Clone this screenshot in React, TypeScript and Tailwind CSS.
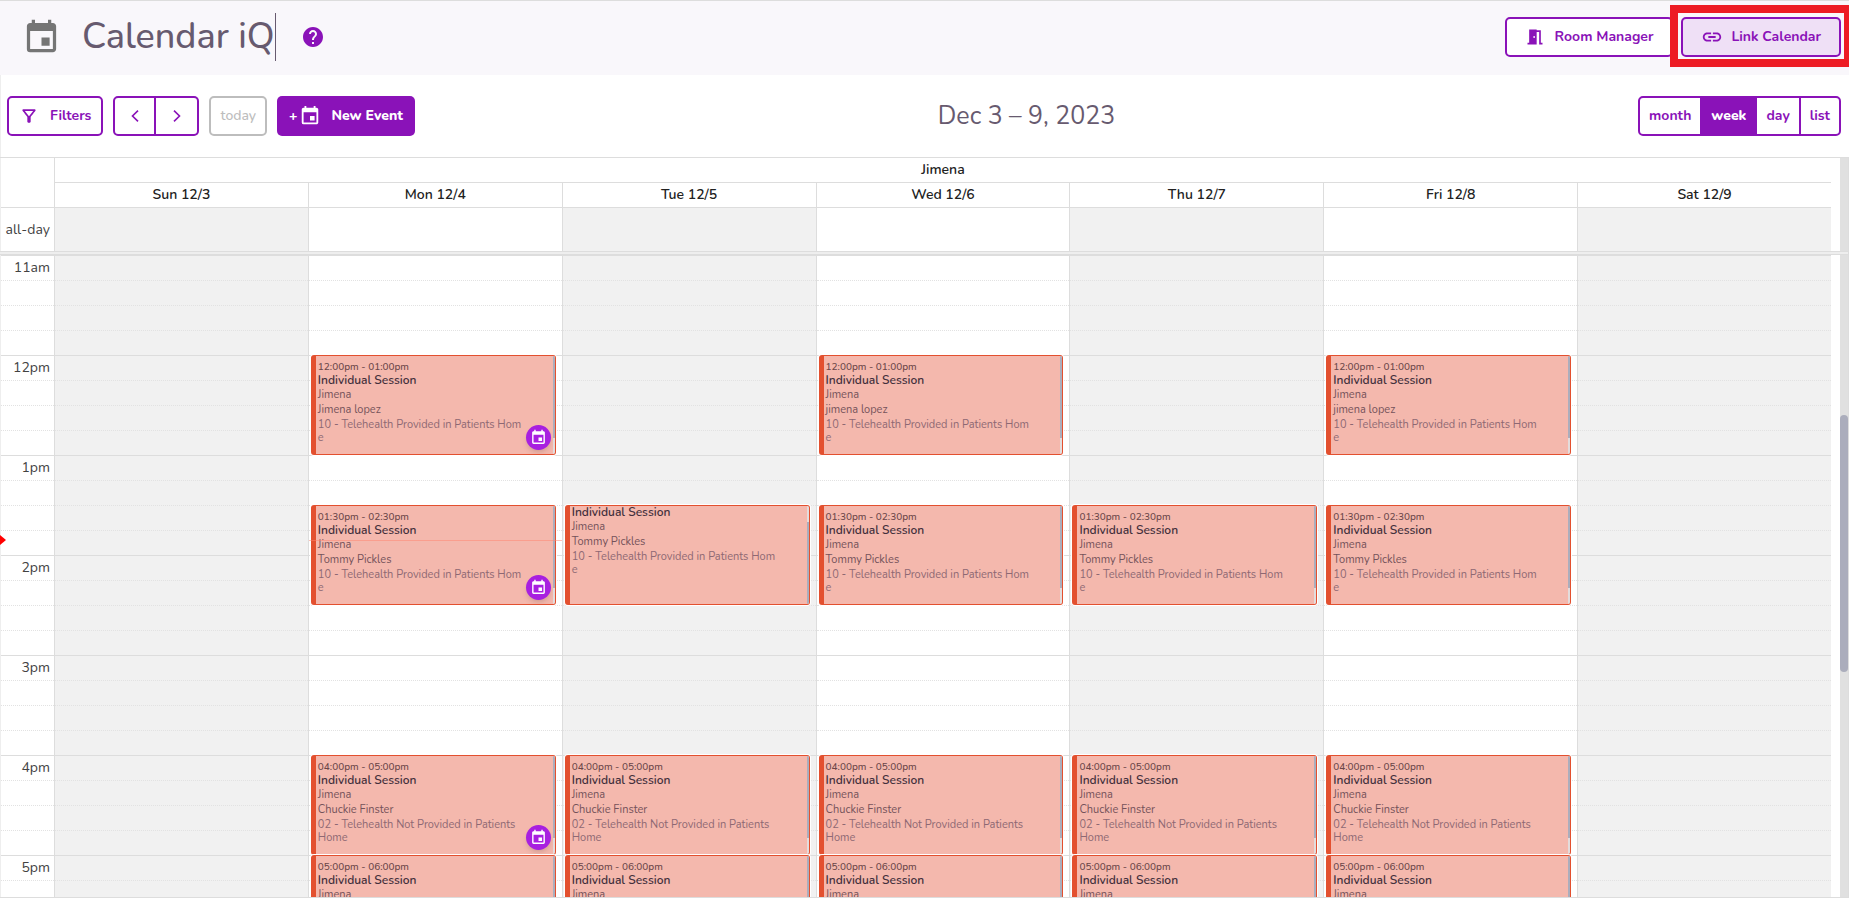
import React, { useState } from 'react'
import clsx from 'clsx'
import {
  MdHelp,
  MdInsertInvitation,
  MdLink,
  MdMeetingRoom,
  MdOutlineFilterAlt,
} from 'react-icons/md'

interface CalendarEvent {
  start: number
  time: string
  client: string
  place: string
  synced?: boolean
  scrolled?: boolean
}

interface Day {
  label: string
  now?: boolean
  events: CalendarEvent[]
}

const HOUR_HEIGHT = 100
const FIRST_HOUR = 11
const NOW = 13.85

const HOURS = ['11am', '12pm', '1pm', '2pm', '3pm', '4pm', '5pm']
const VIEWS = ['month', 'week', 'day', 'list']

const PATIENT_HOME = '10 - Telehealth Provided in Patients Hom\ne'
const NOT_HOME = '02 - Telehealth Not Provided in Patients\nHome'

const noon = (client: string): CalendarEvent => ({
  start: 12,
  time: '12:00pm - 01:00pm',
  client,
  place: PATIENT_HOME,
})

const afternoon: CalendarEvent = {
  start: 13.5,
  time: '01:30pm - 02:30pm',
  client: 'Tommy Pickles',
  place: PATIENT_HOME,
}

const four: CalendarEvent = {
  start: 16,
  time: '04:00pm - 05:00pm',
  client: 'Chuckie Finster',
  place: NOT_HOME,
}

const five: CalendarEvent = {
  start: 17,
  time: '05:00pm - 06:00pm',
  client: 'Chuckie Finster',
  place: NOT_HOME,
}

const DAYS: Day[] = [
  { label: 'Sun 12/3', events: [] },
  {
    label: 'Mon 12/4',
    now: true,
    events: [
      { ...noon('Jimena lopez'), synced: true },
      { ...afternoon, synced: true },
      { ...four, synced: true },
      five,
    ],
  },
  { label: 'Tue 12/5', events: [{ ...afternoon, scrolled: true }, four, five] },
  { label: 'Wed 12/6', events: [noon('jimena lopez'), afternoon, four, five] },
  { label: 'Thu 12/7', events: [afternoon, four, five] },
  { label: 'Fri 12/8', events: [noon('jimena lopez'), afternoon, four, five] },
  { label: 'Sat 12/9', events: [] },
]

const outlineButton =
  'flex h-10 items-center rounded-[5px] border-2 border-[#8a12b8] text-sm font-bold text-[#8a12b8]'

function Slots() {
  return (
    <>
      {HOURS.map((hour) => (
        <div key={hour} className="h-[100px] border-t border-[#ddd]">
          <div className="h-6" />
          <div className="h-[25px] border-t border-dotted border-[#e2e2e2]" />
          <div className="h-[25px] border-t border-dotted border-[#e2e2e2]" />
          <div className="h-[25px] border-t border-dotted border-[#e2e2e2]" />
        </div>
      ))}
    </>
  )
}

function EventCard({ event }: { event: CalendarEvent }) {
  return (
    <article
      className="absolute left-[2px] right-[6px] h-[100px] overflow-hidden rounded-[3px] border border-l-[5px] border-[#e3502f] bg-[#f4b8ad] pl-[2px] shadow-[0_0_0_1px_#fff]"
      style={{ top: (event.start - FIRST_HOUR) * HOUR_HEIGHT }}
    >
      {!event.scrolled && (
        <p className="pt-1 text-[10px] font-medium leading-[14px] text-[#6b4649]">{event.time}</p>
      )}
      <h3 className="text-xs font-semibold leading-[13px] text-[#43303c]">Individual Session</h3>
      <p className="text-[11px] leading-[15px] text-[#74525a]">Jimena</p>
      <p className="text-[11px] leading-[15px] text-[#74525a]">{event.client}</p>
      <p className="whitespace-pre pt-px text-[11px] leading-[13px] text-[#8e6873]">{event.place}</p>

      {/* Thanh cuộn của sự kiện */}
      <div
        className={clsx(
          'absolute inset-y-0 right-0 flex w-[2px] bg-[#e3dcdc]',
          event.scrolled ? 'items-end' : 'items-start'
        )}
      >
        <div className="h-5/6 w-full bg-[#abadbc]" />
      </div>

      {event.synced && (
        <button
          type="button"
          aria-label="Linked calendar"
          className="absolute bottom-1 right-1 flex size-[25px] items-center justify-center rounded-full bg-[#a81fe0] text-white shadow-md"
        >
          <MdInsertInvitation size={17} />
        </button>
      )}
    </article>
  )
}

export default function App() {
  const [view, setView] = useState('week')

  return (
    <div className="flex h-screen min-h-0 flex-col overflow-hidden bg-white font-['Nunito','Open_Sans',sans-serif] text-[#212121]">
      <header className="flex h-[75px] shrink-0 items-center border-t border-[#ddd] bg-[#f9f7fb] pb-[2px] pl-[22px] pr-2">
        <MdInsertInvitation size={39} className="text-[#757575]" />
        <h1 className="ml-[21px] border-r border-[#675a6f] text-4xl font-medium leading-[48px] text-[#675a6f]">
          Calendar iQ
        </h1>
        <button type="button" aria-label="Help" className="ml-[25px] text-[#8a12b8]">
          <MdHelp size={24} />
        </button>

        <div className="ml-auto flex gap-2">
          <button type="button" className={clsx(outlineButton, 'gap-[10px] bg-white px-[18px]')}>
            <MdMeetingRoom size={20} />
            Room Manager
          </button>
          <div className="relative">
            <button type="button" className={clsx(outlineButton, 'gap-2 bg-[#efe0f6] px-[18px]')}>
              <MdLink size={22} />
              Link Calendar
            </button>
            <div className="pointer-events-none absolute -inset-x-[11px] -bottom-[10px] -top-3 border-8 border-[#ed1c24]" />
          </div>
        </div>
      </header>

      <div className="flex h-[82px] shrink-0 items-center justify-between border-l border-[#eee] pl-[6px] pr-2">
        <div className="flex items-center gap-[10px]">
          <button type="button" className={clsx(outlineButton, 'gap-[11px] px-[10px]')}>
            <MdOutlineFilterAlt size={20} />
            Filters
          </button>
          <div className="flex">
            <button
              type="button"
              aria-label="Previous week"
              className={clsx(outlineButton, 'w-[43px] justify-center rounded-r-none')}
            >
              <svg width="8" height="12" viewBox="0 0 8 12" fill="none" stroke="currentColor" strokeWidth="1.6">
                <path d="M7 .7 1.5 6 7 11.3" />
              </svg>
            </button>
            <button
              type="button"
              aria-label="Next week"
              className={clsx(outlineButton, 'w-[43px] justify-center rounded-l-none border-l-0')}
            >
              <svg width="8" height="12" viewBox="0 0 8 12" fill="none" stroke="currentColor" strokeWidth="1.6">
                <path d="M1 .7 6.5 6 1 11.3" />
              </svg>
            </button>
          </div>
          <button
            type="button"
            disabled
            className="h-10 rounded-[5px] border-2 border-[#bdbdbd] px-[9px] text-sm font-medium text-[#bdbdbd]"
          >
            today
          </button>
          <button
            type="button"
            className="flex h-10 items-center rounded-[5px] bg-[#8a12b8] px-3 text-sm font-extrabold text-white"
          >
            +
            <MdInsertInvitation size={22} className="ml-[2px] mr-[10px]" />
            New Event
          </button>
        </div>

        <h2 className="pt-[2px] text-[25px] text-[#675a6f]">Dec 3 – 9, 2023</h2>

        <div className="flex rounded-[5px] border-2 border-[#8a12b8]">
          {VIEWS.map((name) => (
            <button
              key={name}
              type="button"
              onClick={() => setView(name)}
              className={clsx(
                'h-9 border-l-2 border-[#8a12b8] px-[9px] text-sm first:border-l-0',
                view === name ? 'bg-[#8a12b8] font-extrabold text-white' : 'font-bold text-[#8a12b8]'
              )}
            >
              {name}
            </button>
          ))}
        </div>
      </div>

      <main className="flex min-h-0 flex-1 flex-col border-y border-r border-[#ddd]">
        <div className="flex h-[93px] shrink-0">
          <div className="flex w-[54px] shrink-0 flex-col border-l border-[#eee] text-sm">
            <div className="h-[50px] border-b border-[#ddd]" />
            <div className="flex flex-1 items-center justify-end pr-1 text-[#424242]">all-day</div>
          </div>
          <div className="flex min-w-0 flex-1 flex-col">
            <div className="h-6 border-l border-[#ddd] text-center text-sm font-semibold leading-6">
              Jimena
            </div>
            <div className="grid flex-1 grid-cols-7 border-t border-[#ddd]">
              {DAYS.map((day, index) => (
                <div key={day.label} className="flex flex-col border-l border-[#ddd]">
                  <div className="h-[25px] border-b border-[#ddd] text-center text-sm font-semibold leading-6">
                    {day.label}
                  </div>
                  <div className={clsx('flex-1', index % 2 === 0 ? 'bg-[#f1f1f1]' : 'bg-white')} />
                </div>
              ))}
            </div>
          </div>
          <div className="ml-[9px] w-2 bg-[#e0e0e0]" />
        </div>

        <div className="h-1 shrink-0 border-y border-[#ddd] bg-[#eee]" />

        <div className="flex min-h-0 flex-1 overflow-hidden">
          {/* Cột giờ */}
          <div className="relative w-[54px] shrink-0 border-l border-[#eee]">
            <Slots />
            <div className="absolute inset-x-0 top-0">
              {HOURS.map((hour) => (
                <div key={hour} className="h-[100px] pr-1 text-right text-sm leading-[26px] text-[#424242]">
                  {hour}
                </div>
              ))}
            </div>
            <div
              className="absolute -left-px size-0 -translate-y-1/2 border-y-[5px] border-l-[6px] border-y-transparent border-l-[#f00]"
              style={{ top: (NOW - FIRST_HOUR) * HOUR_HEIGHT }}
            />
          </div>

          <div className="grid min-w-0 flex-1 grid-cols-7">
            {DAYS.map((day, index) => (
              <section
                key={day.label}
                aria-label={day.label}
                className={clsx(
                  'relative border-l border-[#ddd]',
                  index % 2 === 0 ? 'bg-[#f1f1f1]' : 'bg-white'
                )}
              >
                <Slots />
                {day.events.map((event) => (
                  <EventCard key={event.start} event={event} />
                ))}
                {day.now && (
                  <div
                    className="absolute inset-x-0 h-px bg-[#ff8370]/50"
                    style={{ top: (NOW - FIRST_HOUR) * HOUR_HEIGHT }}
                  />
                )}
              </section>
            ))}
          </div>

          {/* Thanh cuộn */}
          <div className="ml-[9px] w-2 shrink-0 bg-[#e0e0e0] pt-[160px]">
            <div className="h-[257px] rounded-full bg-[#abadbc]" />
          </div>
        </div>
      </main>
    </div>
  )
}
